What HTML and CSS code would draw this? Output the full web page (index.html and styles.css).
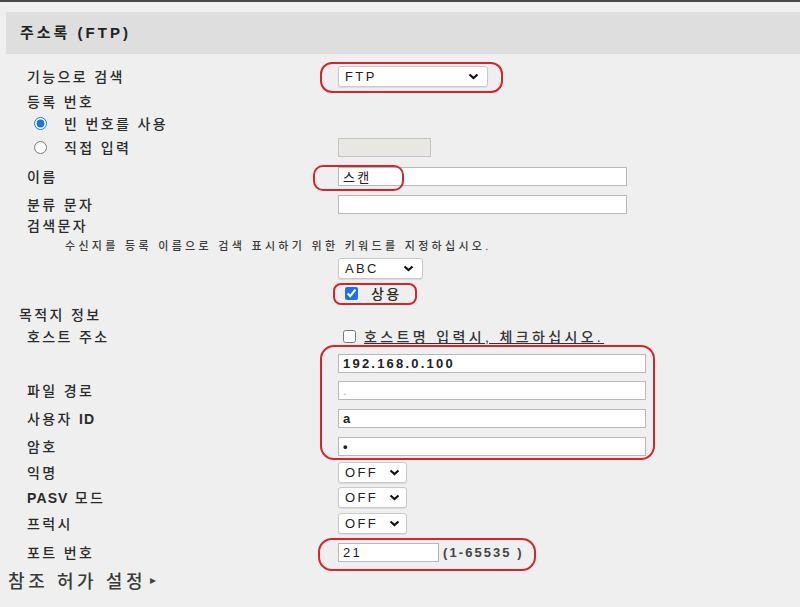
FILE: index.html
```html
<!DOCTYPE html>
<html lang="ko">
<head>
    <meta charset="UTF-8">
    <meta name="viewport" content="width=device-width, initial-scale=1.0">
    <title>주소록 (FTP)</title>
    <link rel="stylesheet" href="styles.css">
</head>
<body>

    <div class="page">
        <div class="title-bar">주소록 (FTP)</div>

        <div class="form">
            <div class="row h24">
                <span class="label">기능으로 검색</span>
                <div class="select select-wide"><span>FTP</span><svg width="11" height="7" viewBox="0 0 11 7"><path d="M1.5 1.5 L5.5 5 L9.5 1.5" fill="none" stroke="#111" stroke-width="2.2"/></svg></div>
            </div>
            <div class="row h25">
                <span class="label">등록 번호</span>
            </div>
            <div class="row h20">
                <label class="label radio-label"><input type="radio" name="num" checked>빈 번호를 사용</label>
            </div>
            <div class="row h28">
                <label class="label radio-label"><input type="radio" name="num">직접 입력</label>
                <input class="text-input short" type="text" disabled>
            </div>
            <div class="row h30">
                <span class="label">이름</span>
                <input class="text-input" type="text" value="스캔">
            </div>
            <div class="row h26">
                <span class="label">분류 문자</span>
                <input class="text-input" type="text">
            </div>
            <div class="row h16">
                <span class="label">검색문자</span>
            </div>
            <div class="row h24 note">
                수신지를 등록 이름으로 검색 표시하기 위한 키워드를 지정하십시오.
            </div>
            <div class="row h23 no-label">
                <div class="select select-abc"><span>ABC</span><svg width="11" height="7" viewBox="0 0 11 7"><path d="M1.5 1.5 L5.5 5 L9.5 1.5" fill="none" stroke="#111" stroke-width="2.2"/></svg></div>
            </div>
            <div class="row h26 no-label">
                <label class="check"><input type="checkbox" checked>상용</label>
            </div>

            <div class="row h16 section">목적지 정보</div>
            <div class="row h28">
                <span class="label">호스트 주소</span>
                <label class="check host-check"><input type="checkbox">호스트명 입력시, 체크하십시오.</label>
            </div>
            <div class="row h26 no-label">
                <input class="text-input long bold" type="text" value="192.168.0.100">
            </div>
            <div class="row h28">
                <span class="label">파일 경로</span>
                <input class="text-input long faint" type="text" value=".">
            </div>
            <div class="row h28">
                <span class="label">사용자 <b>ID</b></span>
                <input class="text-input long bold" type="text" value="a">
            </div>
            <div class="row h28">
                <span class="label">암호</span>
                <input class="text-input long bold" type="text" value="•">
            </div>
            <div class="row h24">
                <span class="label">익명</span>
                <div class="select select-off"><span>OFF</span><svg width="11" height="7" viewBox="0 0 11 7"><path d="M1.5 1.5 L5.5 5 L9.5 1.5" fill="none" stroke="#111" stroke-width="2.2"/></svg></div>
            </div>
            <div class="row h26">
                <span class="label"><b>PASV</b> 모드</span>
                <div class="select select-off"><span>OFF</span><svg width="11" height="7" viewBox="0 0 11 7"><path d="M1.5 1.5 L5.5 5 L9.5 1.5" fill="none" stroke="#111" stroke-width="2.2"/></svg></div>
            </div>
            <div class="row h26">
                <span class="label">프럭시</span>
                <div class="select select-off"><span>OFF</span><svg width="11" height="7" viewBox="0 0 11 7"><path d="M1.5 1.5 L5.5 5 L9.5 1.5" fill="none" stroke="#111" stroke-width="2.2"/></svg></div>
            </div>
            <div class="row h32">
                <span class="label">포트 번호</span>
                <input class="text-input port" type="text" value="21">
                <span class="range">(1-65535 )</span>
            </div>
            <div class="row h24 more">참조 허가 설정<span class="arrow">▸</span></div>
        </div>

        <!-- red marks drawn over the screenshot -->
        <div class="mark mark-ftp"></div>
        <div class="mark mark-name"></div>
        <div class="mark mark-use"></div>
        <div class="mark mark-dest"></div>
        <div class="mark mark-port"></div>
    </div>

</body>
</html>
```

FILE: styles.css
```css
body {
    margin: 0;
    background-color: #efefef;
    font-family: "Liberation Sans", "Noto Sans CJK KR", sans-serif;
    color: #2a2a2a;
    font-size: 14px;
    font-weight: 500;
    letter-spacing: 0.17em;
}

.page {
    position: relative;
    height: 607px;
    border-top: 2px solid #4a4a4a;
    overflow: hidden;
}

.title-bar {
    margin: 10px 0 0 6px;
    height: 42px;
    line-height: 42px;
    padding-left: 14px;
    background-color: #dedede;
    font-weight: bold;
    font-size: 15px;
    letter-spacing: 0.2em;
    color: #222;
}

.form {
    margin-top: 10px;
}

.row {
    display: flex;
    align-items: center;
    padding-left: 27px;
}

.h16 { height: 16px; }
.h20 { height: 20px; }
.h23 { height: 23px; }
.h24 { height: 24px; }
.h25 { height: 25px; }
.h26 { height: 26px; }
.h28 { height: 28px; }
.h30 { height: 30px; }
.h32 { height: 32px; }

.label {
    width: 311px;
    flex-shrink: 0;
}

.label b {
    letter-spacing: 0.08em;
}

.no-label {
    padding-left: 338px;
}

.radio-label {
    display: flex;
    align-items: center;
}

.radio-label input {
    width: 13px;
    height: 13px;
    margin: 0 17px 0 7px;
    accent-color: #1a73e8;
}

.note {
    padding-left: 65px;
    font-size: 11px;
    letter-spacing: 0.3em;
    color: #3a3a3a;
}

.section {
    padding-left: 19px;
}

.more {
    padding-left: 8px;
    font-size: 18px;
    letter-spacing: 0.2em;
    color: #3a3a3a;
}

.more .arrow {
    font-size: 12px;
    margin-left: 4px;
    color: #444;
}

.text-input {
    box-sizing: border-box;
    width: 289px;
    height: 19px;
    border: 1px solid #b8b8b8;
    background-color: #fff;
    padding: 0 4px;
    font-family: "Liberation Sans", "Noto Sans CJK KR", sans-serif;
    font-size: 13px;
    letter-spacing: 0.17em;
    color: #222;
    outline: none;
}

.text-input.short {
    width: 93px;
    background-color: #e9e7e4;
    border-color: #c4c4c4;
}

.text-input.long {
    width: 308px;
}

.text-input.port {
    width: 101px;
}

.text-input.bold {
    font-weight: bold;
}

.text-input.faint {
    color: #aaa;
}

.range {
    margin-left: 4px;
    font-size: 13px;
    font-weight: bold;
    color: #444;
    letter-spacing: 0.16em;
}

.select {
    box-sizing: border-box;
    display: flex;
    align-items: center;
    justify-content: space-between;
    height: 21px;
    padding: 0 8px 0 6px;
    background-color: #fff;
    border: 1px solid #c9c9c9;
    border-radius: 3px;
    box-shadow: 0 1px 1px rgba(0, 0, 0, 0.08);
    font-size: 13px;
    color: #222;
}

.select-wide {
    width: 150px;
}

.select-abc {
    width: 85px;
}

.select-off {
    width: 69px;
    padding-right: 6px;
}

.check {
    display: flex;
    align-items: center;
}

.check input {
    width: 13px;
    height: 13px;
    margin: 0 13px 0 7px;
    accent-color: #1a73e8;
}

.host-check input {
    margin: 0 8px 0 5px;
}

.host-check {
    text-decoration: underline;
    letter-spacing: 0.24em;
    color: #333;
}

.mark {
    position: absolute;
    border: 2px solid #d3252c;
    border-radius: 12px;
}

.mark-ftp {
    left: 320px;
    top: 60px;
    width: 179px;
    height: 27px;
}

.mark-name {
    left: 313px;
    top: 163px;
    width: 87px;
    height: 22px;
    border-radius: 10px;
}

.mark-use {
    left: 333px;
    top: 281px;
    width: 80px;
    height: 18px;
    border-radius: 8px;
}

.mark-dest {
    left: 320px;
    top: 343px;
    width: 331px;
    height: 111px;
    border-radius: 14px;
}

.mark-port {
    left: 318px;
    top: 536px;
    width: 214px;
    height: 29px;
    border-radius: 14px;
}
```
